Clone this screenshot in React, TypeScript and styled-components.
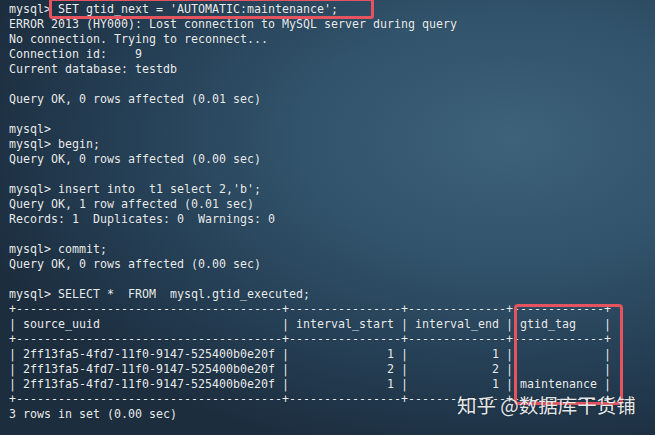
import styled, { createGlobalStyle } from 'styled-components';

const GlobalStyle = createGlobalStyle`
  html, body {
    margin: 0;
    padding: 0;
    background: #1d2d3d;
  }
`;

const Screen = styled.main`
  position: relative;
  width: 655px;
  height: 435px;
  overflow: hidden;
  box-sizing: border-box;
  padding: 2px 0 0 9px;
  background:
    radial-gradient(ellipse 85% 75% at 78% 32%, #3d627a 0%, #31536b 38%, #253f55 70%, #1c2d3e 100%);
  font-family: "DejaVu Sans Mono", "Liberation Mono", monospace;
  font-size: 11.63px;
  line-height: 15px;
  color: #e9edf0;
  text-shadow: 0 0 1px rgba(0, 0, 0, 0.4);
`;

const Line = styled.div`
  white-space: pre;
  height: 15px;
`;

const Marked = styled.span`
  position: relative;

  &::after {
    content: '';
    position: absolute;
    left: -2px;
    top: -4px;
    right: -36px;
    bottom: -3px;
    border: 3px solid #e5535f;
    border-radius: 3px;
  }
`;

const Callout = styled.div`
  position: absolute;
  left: 514px;
  top: 304px;
  width: 109px;
  height: 101px;
  box-sizing: border-box;
  border: 3px solid #e5535f;
  border-radius: 4px;
`;

const Watermark = styled.div`
  position: absolute;
  left: 457px;
  top: 394px;
  font-family: "Noto Sans CJK SC", "Noto Sans", sans-serif;
  font-size: 19.5px;
  line-height: 22px;
  color: rgba(250, 250, 250, 0.92);
  text-shadow: 0 0 2px rgba(0, 0, 0, 0.35);
  white-space: nowrap;
`;

const uuid = '2ff13fa5-4fd7-11f0-9147-525400b0e20f';
const widths = [36, 14, 12, 11];

const border = '+' + widths.map((w) => '-'.repeat(w + 2)).join('+') + '+';
const row = (cells: string[], right: boolean[]) =>
  '| ' +
  cells.map((c, i) => (right[i] ? c.padStart(widths[i]) : c.padEnd(widths[i]))).join(' | ') +
  ' |';

const head = row(['source_uuid', 'interval_start', 'interval_end', 'gtid_tag'], [false, false, false, false]);
const num = [false, true, true, false];

const lines = [
  "ERROR 2013 (HY000): Lost connection to MySQL server during query",
  'No connection. Trying to reconnect...',
  'Connection id:    9',
  'Current database: testdb',
  '',
  'Query OK, 0 rows affected (0.01 sec)',
  '',
  'mysql>',
  'mysql> begin;',
  'Query OK, 0 rows affected (0.00 sec)',
  '',
  "mysql> insert into  t1 select 2,'b';",
  'Query OK, 1 row affected (0.01 sec)',
  'Records: 1  Duplicates: 0  Warnings: 0',
  '',
  'mysql> commit;',
  'Query OK, 0 rows affected (0.00 sec)',
  '',
  'mysql> SELECT *  FROM  mysql.gtid_executed;',
  border,
  head,
  border,
  row([uuid, '1', '1', ''], num),
  row([uuid, '2', '2', ''], num),
  row([uuid, '1', '1', 'maintenance'], num),
  border,
  '3 rows in set (0.00 sec)',
];

export default function App() {
  return (
    <>
      <GlobalStyle />
      <Screen>
        <Line>
          mysql&gt;<Marked> SET gtid_next = 'AUTOMATIC:maintenance';</Marked>
        </Line>
        {lines.map((text, i) => (
          <Line key={i}>{text}</Line>
        ))}
        <Callout />
        <Watermark>知乎 @数据库干货铺</Watermark>
      </Screen>
    </>
  );
}
